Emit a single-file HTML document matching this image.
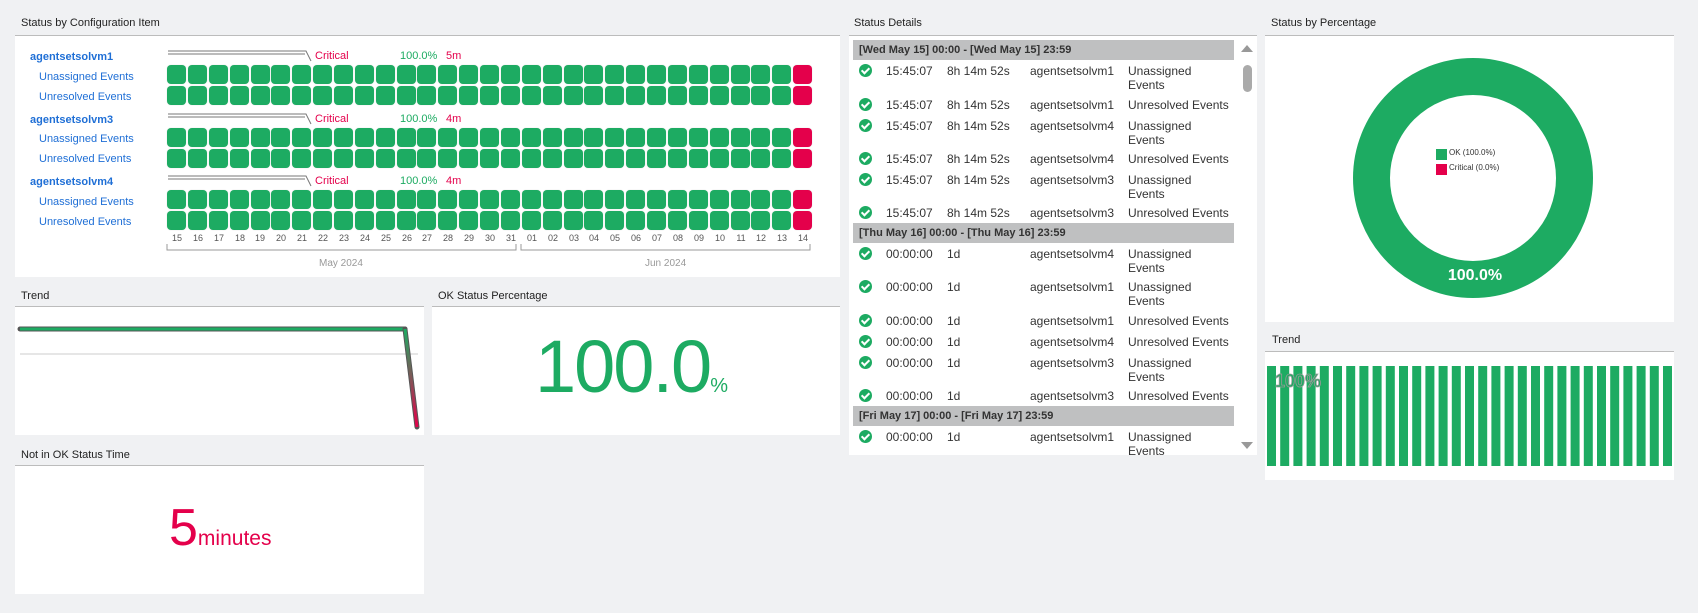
<!DOCTYPE html>
<html><head><meta charset="utf-8"><style>
*{margin:0;padding:0;box-sizing:border-box}
body{width:1698px;height:613px;background:#f0f1f3;font-family:"Liberation Sans",sans-serif;position:relative;overflow:hidden;color:#222}
.a{position:absolute}
.t{position:absolute;font-size:11px;color:#222;white-space:nowrap}
.hl{position:absolute;height:1px;background:#bcbcbc}
.w{position:absolute;background:#fff}
.tile{position:absolute;width:19px;height:19px;border-radius:4px;background:#1dab62;box-shadow:0 0 1px #ccc}
.r{background:#e4004b}
.b{position:absolute;font-size:11px;color:#1f6fd6;white-space:nowrap}
.d{position:absolute;font-size:9px;color:#555;width:20px;text-align:center}
.row{position:absolute;font-size:12px;color:#333;line-height:14px}
.hd{position:absolute;left:853px;width:381px;height:20px;background:#bfc0c1;font-size:11px;font-weight:bold;color:#333;padding:4px 6px}
.ck{position:absolute;width:13px;height:13px;border-radius:50%;background:#1dab62}
.ck:after{content:"";position:absolute;left:4px;top:2px;width:3px;height:6px;border:solid #fff;border-width:0 2px 2px 0;transform:rotate(45deg)}
</style></head><body>
<!-- Panel 1 -->
<div class="t" style="left:21px;top:17px">Status by Configuration Item</div>
<div class="hl" style="left:15px;top:35px;width:825px"></div>
<div class="w" style="left:15px;top:36px;width:825px;height:241px"></div>
<div class="b" style="left:30px;top:51px;font-weight:bold">agentsetsolvm1</div>
<div class="b" style="left:39px;top:71px">Unassigned Events</div>
<div class="b" style="left:39px;top:91px">Unresolved Events</div>
<div class="b" style="left:30px;top:114px;font-weight:bold">agentsetsolvm3</div>
<div class="b" style="left:39px;top:133px">Unassigned Events</div>
<div class="b" style="left:39px;top:153px">Unresolved Events</div>
<div class="b" style="left:30px;top:176px;font-weight:bold">agentsetsolvm4</div>
<div class="b" style="left:39px;top:196px">Unassigned Events</div>
<div class="b" style="left:39px;top:216px">Unresolved Events</div>
<svg class="a" style="left:0;top:0" width="840" height="280">
<g fill="none" stroke="#777" stroke-width="1">
<path d="M168 51H306L311 61M168 54H305"/>
<path d="M168 114H306L311 124M168 117H305"/>
<path d="M168 176H306L311 186M168 179H305"/>
</g>
<path d="M167 244V250H516V244M521 244V250H810V244" fill="none" stroke="#999"/>
</svg>
<div class="t" style="left:315px;top:50px;color:#e4004b">Critical</div><div class="t" style="left:400px;top:50px;color:#1dab62">100.0%</div><div class="t" style="left:446px;top:50px;color:#e4004b">5m</div>
<div class="t" style="left:315px;top:113px;color:#e4004b">Critical</div><div class="t" style="left:400px;top:113px;color:#1dab62">100.0%</div><div class="t" style="left:446px;top:113px;color:#e4004b">4m</div>
<div class="t" style="left:315px;top:175px;color:#e4004b">Critical</div><div class="t" style="left:400px;top:175px;color:#1dab62">100.0%</div><div class="t" style="left:446px;top:175px;color:#e4004b">4m</div>
<div id="tiles"></div>
<div id="days" class="a" style="left:0;top:233px">
<div class="d" style="left:167px">15</div><div class="d" style="left:188px">16</div><div class="d" style="left:209px">17</div><div class="d" style="left:230px">18</div><div class="d" style="left:250px">19</div><div class="d" style="left:271px">20</div><div class="d" style="left:292px">21</div><div class="d" style="left:313px">22</div><div class="d" style="left:334px">23</div><div class="d" style="left:355px">24</div><div class="d" style="left:376px">25</div><div class="d" style="left:397px">26</div><div class="d" style="left:417px">27</div><div class="d" style="left:438px">28</div><div class="d" style="left:459px">29</div><div class="d" style="left:480px">30</div><div class="d" style="left:501px">31</div><div class="d" style="left:522px">01</div><div class="d" style="left:543px">02</div><div class="d" style="left:564px">03</div><div class="d" style="left:584px">04</div><div class="d" style="left:605px">05</div><div class="d" style="left:626px">06</div><div class="d" style="left:647px">07</div><div class="d" style="left:668px">08</div><div class="d" style="left:689px">09</div><div class="d" style="left:710px">10</div><div class="d" style="left:731px">11</div><div class="d" style="left:751px">12</div><div class="d" style="left:772px">13</div><div class="d" style="left:793px">14</div>
</div>
<div class="t" style="left:319px;top:258px;color:#999;font-size:10px">May 2024</div>
<div class="t" style="left:645px;top:258px;color:#999;font-size:10px">Jun 2024</div>
<script>
var h='';var tops=[65,86,128,149,190,211];
for(var g=0;g<6;g++)for(var i=0;i<31;i++){h+='<div class="tile'+(i==30?' r':'')+'" style="left:'+(167+i*20.87).toFixed(1)+'px;top:'+tops[g]+'px"></div>';}
document.getElementById('tiles').innerHTML=h;
</script>

<!-- Trend -->
<div class="t" style="left:21px;top:290px">Trend</div>
<div class="hl" style="left:15px;top:306px;width:409px"></div>
<div class="w" style="left:15px;top:307px;width:409px;height:128px"></div>
<svg class="a" style="left:0;top:0" width="440" height="440">
<defs><linearGradient id="lg" x1="0" y1="0" x2="0" y2="1"><stop offset="0" stop-color="#1dab62"/><stop offset="1" stop-color="#e4004b"/></linearGradient></defs>
<line x1="20" y1="354" x2="418" y2="354" stroke="#ddd" stroke-width="1.5"/>
<path d="M20 329H405" stroke="#555" stroke-width="5" stroke-linecap="round"/>
<path d="M20 329H405" stroke="#1dab62" stroke-width="3"/>
<path d="M405 329L417 427" stroke="#555" stroke-width="5" stroke-linecap="round"/>
<path d="M405 329L417 427" stroke="url(#lg)" stroke-width="3"/>
</svg>
<!-- OK status -->
<div class="t" style="left:438px;top:290px">OK Status Percentage</div>
<div class="hl" style="left:432px;top:306px;width:408px"></div>
<div class="w" style="left:432px;top:307px;width:408px;height:128px"></div>
<div class="a" style="left:535px;top:327px;font-size:74px;color:#1dab62;line-height:80px;letter-spacing:-2px">100.0<span style="font-size:20px;letter-spacing:0">%</span></div>
<!-- Not OK -->
<div class="t" style="left:21px;top:449px">Not in OK Status Time</div>
<div class="hl" style="left:15px;top:465px;width:409px"></div>
<div class="w" style="left:15px;top:466px;width:409px;height:128px"></div>
<div class="a" style="left:169px;top:500px;font-size:52px;color:#e4004b;line-height:56px">5<span style="font-size:21px">minutes</span></div>

<!-- Status Details -->
<div class="t" style="left:854px;top:17px">Status Details</div>
<div class="hl" style="left:849px;top:35px;width:408px"></div>
<div class="w" style="left:849px;top:36px;width:408px;height:419px"></div>
<div class="hd" style="top:40px">[Wed May 15] 00:00 - [Wed May 15] 23:59</div>
<div class="hd" style="top:223px">[Thu May 16] 00:00 - [Thu May 16] 23:59</div>
<div class="hd" style="top:406px">[Fri May 17] 00:00 - [Fri May 17] 23:59</div>
<svg class="a" style="left:1240px;top:44px" width="16" height="410"><path d="M1 8L7 1L13 8Z" fill="#999"/><rect x="3" y="21" width="9" height="27" rx="4.5" fill="#aaa"/><path d="M1 398L7 405L13 398Z" fill="#999"/></svg>
<div id="rows"></div>
<script>
var R=[[64,'15:45:07','8h 14m 52s','agentsetsolvm1',1,'Unassigned'],[98,'15:45:07','8h 14m 52s','agentsetsolvm1',0,'Unresolved Events'],[119,'15:45:07','8h 14m 52s','agentsetsolvm4',1,'Unassigned'],[152,'15:45:07','8h 14m 52s','agentsetsolvm4',0,'Unresolved Events'],[173,'15:45:07','8h 14m 52s','agentsetsolvm3',1,'Unassigned'],[206,'15:45:07','8h 14m 52s','agentsetsolvm3',0,'Unresolved Events'],
[247,'00:00:00','1d','agentsetsolvm4',1,'Unassigned'],[280,'00:00:00','1d','agentsetsolvm1',1,'Unassigned'],[314,'00:00:00','1d','agentsetsolvm1',0,'Unresolved Events'],[335,'00:00:00','1d','agentsetsolvm4',0,'Unresolved Events'],[356,'00:00:00','1d','agentsetsolvm3',1,'Unassigned'],[389,'00:00:00','1d','agentsetsolvm3',0,'Unresolved Events'],[430,'00:00:00','1d','agentsetsolvm1',1,'Unassigned']];
var h='';R.forEach(function(r){var y=r[0];h+='<div class="ck" style="left:859px;top:'+(y)+'px"></div><div class="row" style="left:886px;top:'+y+'px">'+r[1]+'</div><div class="row" style="left:947px;top:'+y+'px">'+r[2]+'</div><div class="row" style="left:1030px;top:'+y+'px">'+r[3]+'</div><div class="row" style="left:1128px;top:'+y+'px">'+r[5]+(r[4]?'<br>Events':'')+'</div>';});
document.getElementById('rows').innerHTML=h;
</script>

<!-- Status by Percentage -->
<div class="t" style="left:1271px;top:17px">Status by Percentage</div>
<div class="hl" style="left:1265px;top:35px;width:409px"></div>
<div class="w" style="left:1265px;top:36px;width:409px;height:286px"></div>
<svg class="a" style="left:1265px;top:36px" width="409" height="286">
<circle cx="208" cy="142" r="101.5" fill="none" stroke="#1dab62" stroke-width="37"/>
<rect x="171" y="113" width="11" height="11" fill="#1dab62"/><rect x="171" y="128" width="11" height="11" fill="#e4004b"/>
<text x="184" y="119" font-size="8" fill="#333" font-family="Liberation Sans">OK (100.0%)</text>
<text x="184" y="134" font-size="8" fill="#333" font-family="Liberation Sans">Critical (0.0%)</text>
<text x="210" y="244" font-size="16" font-weight="bold" fill="#fff" text-anchor="middle" font-family="Liberation Sans">100.0%</text>
</svg>
<!-- Trend right -->
<div class="t" style="left:1272px;top:334px">Trend</div>
<div class="hl" style="left:1265px;top:351px;width:409px"></div>
<div class="w" style="left:1265px;top:352px;width:409px;height:128px"></div>
<svg class="a" style="left:1265px;top:352px" width="409" height="128" id="bars"></svg>
<script>
var s='';for(var i=0;i<31;i++){s+='<rect x="'+(2+i*13.2).toFixed(1)+'" y="14" width="9" height="100" fill="#1dab62"/>';}
s+='<text x="10" y="35" font-size="18" font-weight="bold" fill="#1dab62" stroke="#999" stroke-width="0.8" font-family="Liberation Sans">100%</text>';
document.getElementById('bars').innerHTML=s;
</script>
</body></html>
